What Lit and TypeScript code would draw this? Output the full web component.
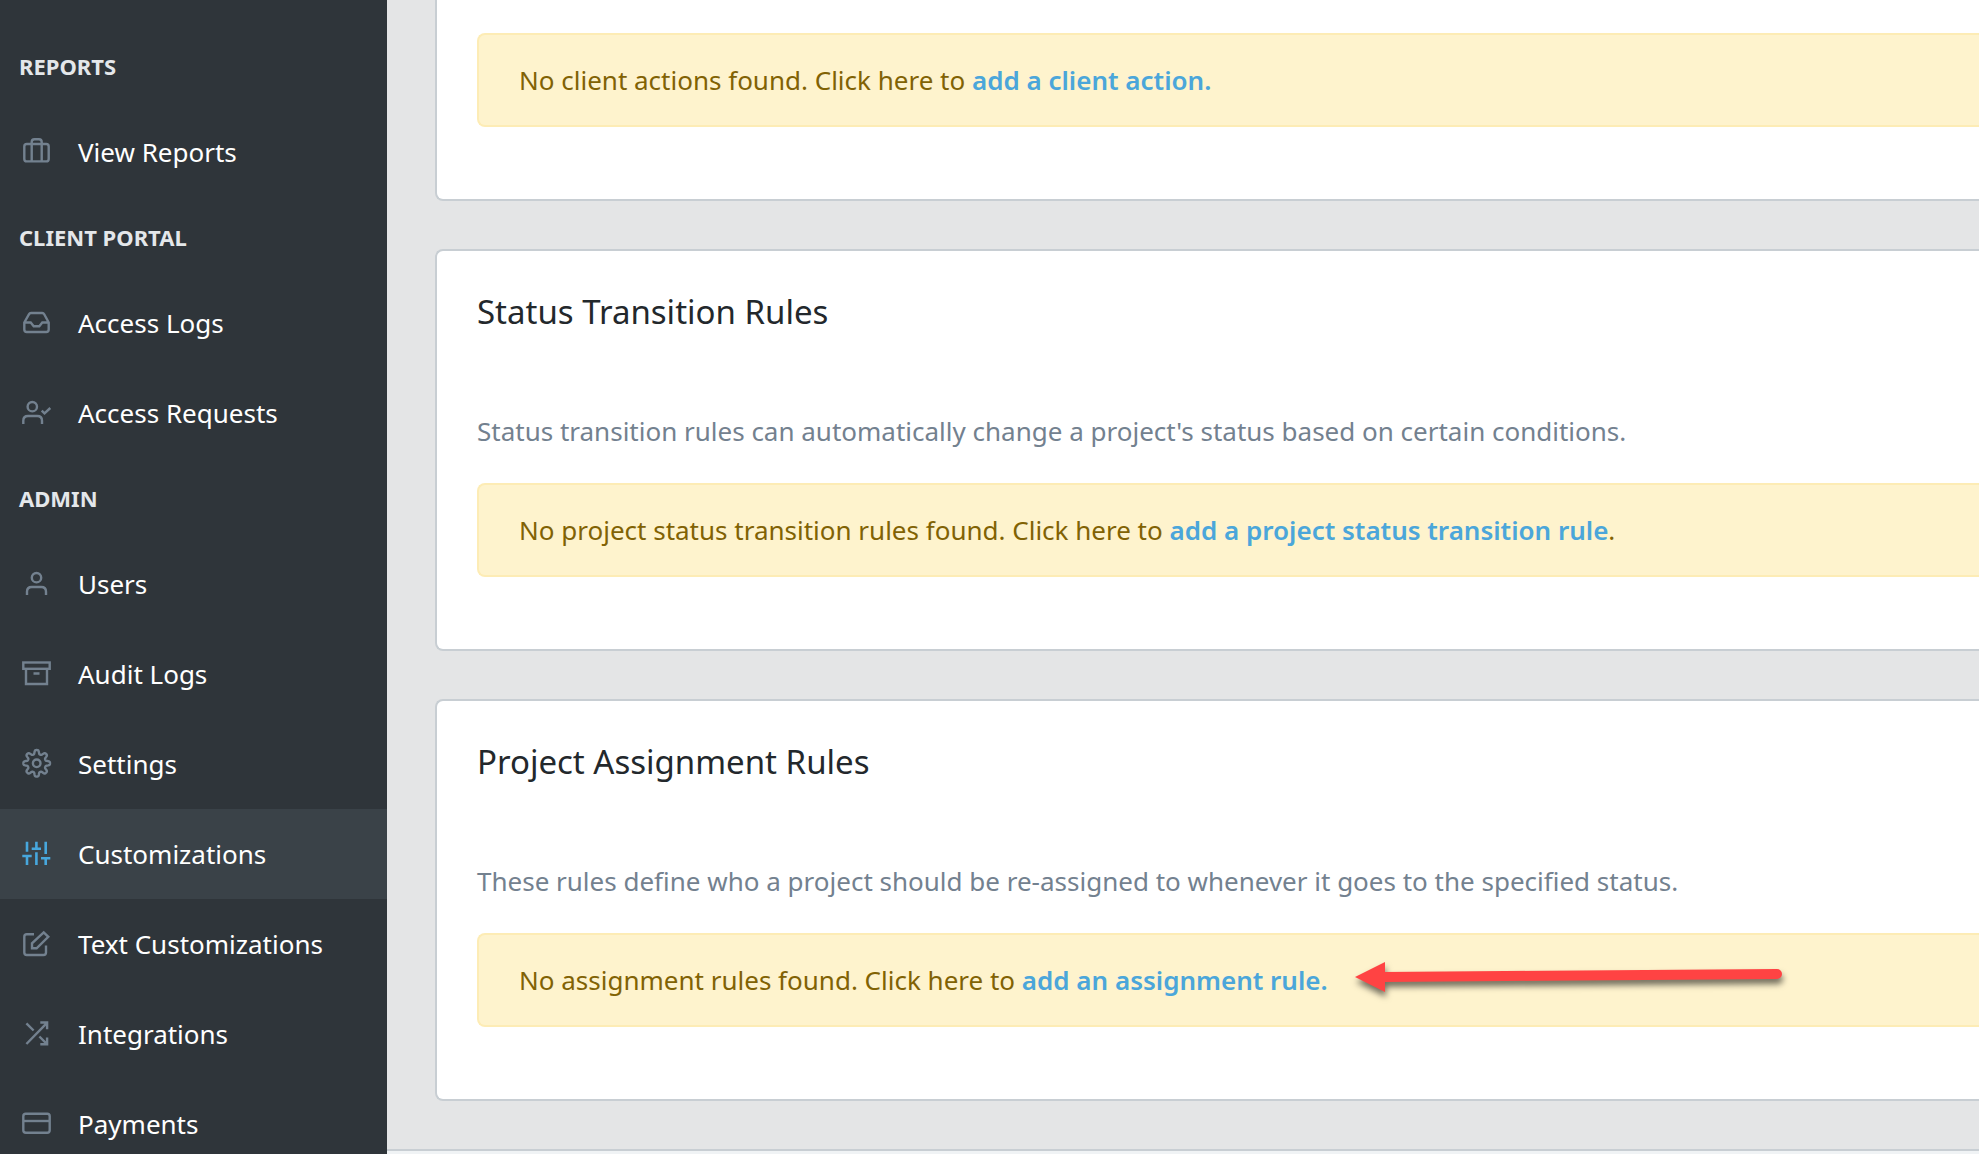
import { LitElement, html, css, svg } from "lit";
import { customElement, property } from "lit/decorators.js";
import { classMap } from "lit/directives/class-map.js";

/** Eight-lobed gear outline around a centre point. */
function gearPath(cx: number, cy: number): string {
  const points: string[] = [];
  const steps = 240;
  for (let i = 0; i < steps; i++) {
    const angle = (i / steps) * Math.PI * 2;
    const radius = 11.3 + (2 * Math.tanh(1.8 * Math.cos(8 * angle))) / Math.tanh(1.8);
    points.push(
      `${(cx + radius * Math.sin(angle)).toFixed(2)} ${(cy - radius * Math.cos(angle)).toFixed(2)}`
    );
  }
  return `M${points.join("L")}Z`;
}

const icons = {
  briefcase: svg`<rect x="3.3" y="8" width="24.4" height="17.4" rx="2.5"/><path d="M10.7 25.4V6q0-2.7 2.7-2.7h4.6q2.7 0 2.7 2.7v19.4"/>`,
  inbox: svg`<path d="M3.3 15.5 7.9 7.3Q8.6 6 10 6h11.2q1.3 0 2 1.3l4.5 8.2v7q0 2.5-2.5 2.5H5.8q-2.5 0-2.5-2.5zM3.3 15.5h6.4l3 3.7h5.6l3-3.7h6.4"/>`,
  userCheck: svg`<circle cx="11.3" cy="9.7" r="4.7"/><path d="M2.3 27v-3.3q0-4.7 4.7-4.7h9.3q4.7 0 4.7 4.7V27M20.7 13.7l2.8 2.7 5.8-5.4"/>`,
  user: svg`<circle cx="15.5" cy="9.7" r="4.7"/><path d="M6 27v-3.3q0-4.7 4.7-4.7h9.6q4.7 0 4.7 4.7V27"/>`,
  archive: svg`<rect x="2.3" y="4.5" width="26.4" height="6.3"/><path d="M5 11v15h21V11M12.5 15.5h6"/>`,
  gear: svg`<path d="${gearPath(15.7, 15.3)}"/><circle cx="15.7" cy="15.3" r="3.8"/>`,
  sliders: svg`<path d="M6 3.7v10M1.3 18h9.4M6 18v9M15.4 3.7v7M10.7 10.7H20M15.4 14.3V27M24.7 3.7V16M20 20.3h9.3M24.7 20.3V27"/>`,
  edit: svg`<path d="M13 6.3H5.8q-2.5 0-2.5 2.5v15.7q0 2.5 2.5 2.5h16.7q2.5 0 2.5-2.5v-7M11 20.3v-5L22.7 4.3l4.6 4.5-11.7 11.5z"/>`,
  shuffle: svg`<path d="M5.4 26 26 4.8M19.3 4.5h6.8v6.8M5.4 5.3l7.2 7.2M18.4 18.5l7.6 7.6M19.3 26.2h6.8v-6.8"/>`,
  card: svg`<rect x="2.3" y="5.7" width="26.4" height="19" rx="2.5"/><path d="M2.3 13h26.4"/>`,
};

type IconName = keyof typeof icons;

interface NavItem {
  label: string;
  icon: IconName;
  active?: boolean;
}

interface NavGroup {
  title: string;
  items: NavItem[];
}

const navigation: NavGroup[] = [
  { title: "Reports", items: [{ label: "View Reports", icon: "briefcase" }] },
  {
    title: "Client Portal",
    items: [
      { label: "Access Logs", icon: "inbox" },
      { label: "Access Requests", icon: "userCheck" },
    ],
  },
  {
    title: "Admin",
    items: [
      { label: "Users", icon: "user" },
      { label: "Audit Logs", icon: "archive" },
      { label: "Settings", icon: "gear" },
      { label: "Customizations", icon: "sliders", active: true },
      { label: "Text Customizations", icon: "edit" },
      { label: "Integrations", icon: "shuffle" },
      { label: "Payments", icon: "card" },
    ],
  },
];

@customElement("side-nav")
export class SideNav extends LitElement {
  static styles = css`
    :host {
      display: block;
      overflow: hidden;
      background: #2f353a;
      color: #fff;
    }
    .nav {
      padding-top: 26px;
    }
    .title {
      margin: 0;
      padding: 0 19px;
      font-size: 22px;
      font-weight: 700;
      line-height: 81px;
      color: #e4e7ea;
      text-transform: uppercase;
    }
    .list {
      margin: 0;
      padding: 0;
      list-style: none;
    }
    .link {
      display: flex;
      align-items: center;
      gap: 25px;
      height: 90px;
      padding: 0 21px;
      box-sizing: border-box;
      color: inherit;
      text-decoration: none;
      white-space: nowrap;
    }
    .link.active {
      background: #3a4248;
    }
    .icon {
      flex: none;
      width: 32px;
      height: 32px;
      fill: none;
      stroke: #73818f;
      stroke-width: 2.4;
    }
    .active .icon {
      stroke: #47a7dd;
      stroke-width: 2.6;
    }
  `;

  render() {
    return html`<nav class="nav">
      ${navigation.map(
        (group) => html`<h2 class="title">${group.title}</h2>
          <ul class="list">
            ${group.items.map(
              (item) => html`<li>
                <a class=${classMap({ link: true, active: !!item.active })} href="#">
                  <svg class="icon" viewBox="0 0 32 32" aria-hidden="true">${icons[item.icon]}</svg>
                  <span>${item.label}</span>
                </a>
              </li>`
            )}
          </ul>`
      )}
    </nav>`;
  }
}

@customElement("rule-card")
export class RuleCard extends LitElement {
  static styles = css`
    :host {
      display: block;
      padding: 40px 0 72px 40px;
      border: 2px solid #c8ced3;
      border-right: 0;
      border-radius: 8px 0 0 8px;
      background: #fff;
    }
    :host([continued]) {
      padding-top: 33px;
      border-top: 0;
      border-top-left-radius: 0;
    }
    .heading {
      margin: 0 0 77px;
      font-size: 33px;
      font-weight: 400;
      line-height: 42px;
      color: #23282c;
    }
    .description {
      margin: 0 0 31px;
      line-height: 42px;
      color: #73818f;
    }
    .notice {
      position: relative;
      padding: 24px 40px;
      border: 2px solid #fdecb5;
      border-right: 0;
      border-radius: 8px 0 0 8px;
      background: #fef3cd;
      color: #816204;
      line-height: 42px;
      white-space: nowrap;
    }
  `;

  @property() heading = "";
  @property() description = "";

  render() {
    return html`
      ${this.heading ? html`<h2 class="heading">${this.heading}</h2>` : null}
      ${this.description ? html`<p class="description">${this.description}</p>` : null}
      <div class="notice"><slot></slot></div>
    `;
  }
}

@customElement("app-root")
export class AppRoot extends LitElement {
  static styles = css`
    :host {
      display: grid;
      grid-template-columns: 387px minmax(0, 1fr);
      height: 100vh;
      overflow: hidden;
      background: #e4e5e6;
      font-family: "Noto Sans", "Open Sans", sans-serif;
      font-size: 26px;
    }
    .page {
      display: flex;
      flex-direction: column;
      min-height: 0;
      overflow: hidden;
    }
    .content {
      display: flex;
      flex-direction: column;
      gap: 48px;
      padding: 0 0 48px 48px;
    }
    .footer {
      flex: 1 0 auto;
      border-top: 2px solid #c8ced3;
      background: #f0f3f5;
    }
    .action {
      color: #4ba6da;
      font-weight: 600;
      text-decoration: none;
    }
    .pointer {
      position: absolute;
      left: 868px;
      top: 17px;
      width: 450px;
      height: 60px;
      filter: drop-shadow(1px 5px 3px rgba(0, 0, 0, 0.55));
    }
  `;

  render() {
    return html`
      <side-nav></side-nav>
      <div class="page">
        <main class="content">
          <rule-card continued>
            No client actions found. Click here to <a class="action" href="#">add a client action.</a>
          </rule-card>
          <rule-card
            heading="Status Transition Rules"
            description="Status transition rules can automatically change a project's status based on certain conditions."
          >
            No project status transition rules found. Click here to
            <a class="action" href="#">add a project status transition rule</a>.
          </rule-card>
          <rule-card
            heading="Project Assignment Rules"
            description="These rules define who a project should be re-assigned to whenever it goes to the specified status."
          >
            No assignment rules found. Click here to
            <a class="action" href="#">add an assignment rule.</a>
            <svg class="pointer" viewBox="0 0 450 60" aria-hidden="true">
              <path d="M36 25 430 22" fill="none" stroke="#ff4343" stroke-width="10" stroke-linecap="round" />
              <path d="M8 25 38 10v30z" fill="#ff4343" />
            </svg>
          </rule-card>
        </main>
        <footer class="footer"></footer>
      </div>
    `;
  }
}
